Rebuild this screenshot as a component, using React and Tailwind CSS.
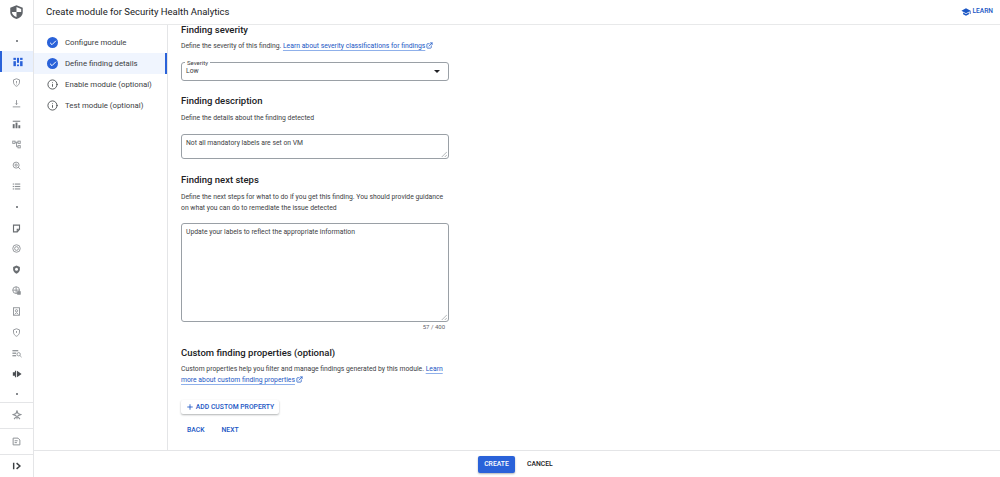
import { Plus, ExternalLink, Check, Info } from 'lucide-react';

const Glyph = ({ children }) => (
    <svg viewBox="0 0 24 24" className="w-[9px] h-[9px]" fill="none" stroke="#8d9195" strokeWidth="2.4">
        {children}
    </svg>
);

const Dot = () => <div className="w-[2px] h-[2px] rounded-full bg-[#5f6368]"></div>;

const railIcons = [
    <Dot />,
    <svg viewBox="0 0 24 24" className="w-[10px] h-[10px]" fill="#2a62d9">
        <rect x="1" y="2" width="6" height="5" /><rect x="1" y="10" width="6" height="12" /><rect x="9.500" y="2" width="5" height="12" /><rect x="9.500" y="18" width="5" height="4" /><rect x="17" y="2" width="6" height="5" /><rect x="17" y="10" width="6" height="12" />
    </svg>,
    <Glyph><path d="M12 2l8 3v6c0 5-3.500 9-8 11-4.500-2-8-6-8-11V5z" /><path d="M12 8v5M12 15v2" /></Glyph>,
    <Glyph><path d="M12 3v12M9 12l3 3 3-3M2 21h20" /></Glyph>,
    <svg viewBox="0 0 24 24" className="w-[9px] h-[9px]" fill="#6b6f73">
        <rect x="2" y="2" width="20" height="2.500" /><rect x="2" y="11" width="5" height="11" /><rect x="9.500" y="7" width="5" height="15" /><rect x="17" y="14" width="5" height="8" />
    </svg>,
    <Glyph><rect x="2" y="3" width="6" height="6" /><rect x="16" y="3" width="6" height="6" /><rect x="16" y="15" width="6" height="6" /><path d="M8 6h8M12 6v12h4" /></Glyph>,
    <Glyph><circle cx="11" cy="11" r="8" /><circle cx="11" cy="11" r="3" /><path d="M16 16l6 6" /></Glyph>,
    <svg viewBox="0 0 24 24" className="w-[9px] h-[9px]" fill="#8d9195">
        <rect x="2" y="4" width="4" height="3" /><rect x="8" y="4" width="14" height="3" /><rect x="2" y="10.500" width="4" height="3" /><rect x="8" y="10.500" width="14" height="3" /><rect x="2" y="17" width="4" height="3" /><rect x="8" y="17" width="14" height="3" />
    </svg>,
    <Dot />,
    <svg viewBox="0 0 24 24" className="w-[9px] h-[9px]" fill="none" stroke="#6b6f73" strokeWidth="3">
        <path d="M4 3h16v11l-6 7H4z" /><path d="M14 21v-7h6" />
    </svg>,
    <Glyph><circle cx="12" cy="12" r="10" /><circle cx="12" cy="12" r="5" /></Glyph>,
    <svg viewBox="0 0 24 24" className="w-[9px] h-[9px]" fill="#6b6f73">
        <path d="M12 1l9 4v6c0 6-4 10-9 12-5-2-9-6-9-12V5z" /><circle cx="12" cy="11" r="4" fill="#fff" />
    </svg>,
    <Glyph><circle cx="11" cy="11" r="9" /><path d="M2 11h18M11 2v18" /><rect x="15" y="15" width="7" height="7" fill="#8d9195" /></Glyph>,
    <Glyph><rect x="4" y="2" width="16" height="20" /><circle cx="12" cy="10" r="3" /><path d="M7 20l5-5 5 5" /></Glyph>,
    <Glyph><path d="M12 2l8 3v6c0 5-3.500 9-8 11-4.500-2-8-6-8-11V5z" /><path d="M12 8v5" /></Glyph>,
    <svg viewBox="0 0 24 24" className="w-[10px] h-[10px]" fill="#8d9195">
        <rect x="1" y="5" width="14" height="3" /><rect x="1" y="11" width="9" height="3" /><rect x="1" y="17" width="9" height="3" /><circle cx="16" cy="15" r="4" fill="none" stroke="#8d9195" strokeWidth="2" /><path d="M19 18l4 4" stroke="#8d9195" strokeWidth="2" />
    </svg>,
    <svg viewBox="0 0 24 24" className="w-[10px] h-[10px]" fill="#4a4e52">
        <path d="M2 8h5V4h3v16H7v-4H2zM12 4l11 8-11 8z" />
    </svg>,
    <Dot />,
];

const steps = [
    { label: 'Configure module', done: true },
    { label: 'Define finding details', done: true, active: true },
    { label: 'Enable module (optional)' },
    { label: 'Test module (optional)' },
];

const DocLink = ({ children }) => (
    <a className="text-[#1a56c4] underline decoration-[#8fb0ea] underline-offset-2">{children}</a>
);

const OpenIcon = () => <ExternalLink className="inline-block ml-[1px] align-[-1px] text-[#1a56c4]" size={7} strokeWidth={2.5} />;

const Grip = () => (
    <svg viewBox="0 0 8 8" className="absolute right-[1px] bottom-[1px] w-[6px] h-[6px]" stroke="#80868b" strokeWidth="0.8">
        <path d="M1 8l7-7M5 8l3-3" />
    </svg>
);

const App = () => {
    return (
        <div className="w-[1000px] h-[477px] flex overflow-hidden bg-white text-[#202124] font-['Roboto',sans-serif]">
            {/* Left rail */}
            <aside className="w-[34px] shrink-0 border-r border-[#e4e5e7] flex flex-col">
                <div className="h-[24px] shrink-0 flex items-center justify-center">
                    <svg viewBox="0 0 24 24" className="w-[15px] h-[16px]">
                        <path d="M12 1l10 4v7c0 5.500-4.300 9.500-10 11C6.300 21.500 2 17.500 2 12V5z" fill="#5f6368" />
                        <path d="M12 4l7.500 3v5H12zM12 12v8C8 18.500 5 16 4.600 12z" fill="#fff" />
                    </svg>
                </div>
                <div className="flex flex-col mt-[6.500px]">
                    {railIcons.map((icon, i) => (
                        <div
                            key={i}
                            className={i === 1
                                ? 'h-[20.800px] flex items-center justify-center bg-[#e8f0fe] border-l-2 border-[#2a62d9]'
                                : 'h-[20.800px] flex items-center justify-center'}
                        >
                            {icon}
                        </div>
                    ))}
                </div>
                <div className="mt-[-3px] h-[26px] border-t border-[#e4e5e7] flex items-center justify-center">
                    <svg viewBox="0 0 24 24" className="w-[10px] h-[10px]" fill="none" stroke="#8d9195" strokeWidth="2.600">
                        <path d="M12 2l2.500 6.500L21 11l-6.500 2.500L12 20l-2.500-6.500L3 11l6.500-2.500z" />
                        <path d="M5 22l4-5M19 22l-4-5" />
                    </svg>
                </div>
                <div className="h-[26px] border-t border-[#e4e5e7] flex items-center justify-center">
                    <svg viewBox="0 0 24 24" className="w-[9px] h-[9px]" fill="none" stroke="#8d9195" strokeWidth="2.600">
                        <path d="M3 3h13l5 5v13H3z" /><path d="M7 10h8M7 15h6" />
                    </svg>
                </div>
                <div className="flex-1 border-t border-[#e4e5e7] flex items-center justify-center">
                    <svg viewBox="0 0 24 24" className="w-[10px] h-[10px]" fill="none" stroke="#3c4043" strokeWidth="3.500">
                        <path d="M4 4v16M11 5l8 7-8 7" />
                    </svg>
                </div>
            </aside>

            <div className="flex-1 min-w-0 flex flex-col">
                {/* Header */}
                <header className="h-[25px] shrink-0 border-b border-[#e8e9ea] flex items-center justify-between pl-[12px] pr-[7px]">
                    <h1 className="text-[9.500px] font-normal">Create module for Security Health Analytics</h1>
                    <div className="flex items-center gap-[2px] text-[#1a56c4] text-[6.600px] font-medium">
                        <svg viewBox="0 0 24 24" className="w-[10px] h-[10px]" fill="#1a56c4">
                            <path d="M12 3L1 9l11 6 9-4.900V17h2V9zM5 13.200v4L12 21l7-3.800v-4L12 17z" />
                        </svg>
                        LEARN
                    </div>
                </header>

                <div className="flex flex-1 min-h-0">
                    {/* Steps */}
                    <nav className="w-[134px] shrink-0 border-r border-[#e4e5e7] pt-[7px]">
                        {steps.map((step) => (
                            <div
                                key={step.label}
                                className={step.active
                                    ? 'h-[21px] flex items-center pl-[13px] gap-[7px] bg-[#f0f5fe] border-r-2 border-[#2a62d9]'
                                    : 'h-[21px] flex items-center pl-[13px] gap-[7px]'}
                            >
                                {step.done ? (
                                    <span className="w-[11px] h-[11px] shrink-0 rounded-full bg-[#2a62d9] flex items-center justify-center">
                                        <Check size={8} strokeWidth={3} className="text-white" />
                                    </span>
                                ) : (
                                    <Info size={11} strokeWidth={1.8} className="shrink-0 text-[#3c4043]" />
                                )}
                                <span className="text-[7.800px] text-[#3c4043] whitespace-nowrap">{step.label}</span>
                            </div>
                        ))}
                    </nav>

                    {/* Form */}
                    <main className="flex-1 min-w-0 overflow-hidden pl-[13px]">
                        <div className="w-[268px]">
                            <h2 className="text-[9.500px] font-medium leading-[10px]">Finding severity</h2>
                            <p className="text-[6.800px] leading-[10px] mt-[6px] text-[#3c4043]">
                                Define the severity of this finding. <DocLink>Learn about severity classifications for findings</DocLink><OpenIcon />
                            </p>
                            <div className="relative h-[19px] mt-[11px] rounded-[3px] border border-[#9aa0a6] flex items-center justify-between pl-[4px] pr-[8px]">
                                <span className="absolute left-[3px] top-[-4px] bg-white px-[2px] text-[6px] leading-[7px] text-[#3c4043]">Severity</span>
                                <span className="text-[6.800px] text-[#3c4043]">Low</span>
                                <span className="w-0 h-0 border-x-[3px] border-x-transparent border-t-[3px] border-t-[#202124]"></span>
                            </div>

                            <h2 className="text-[9.500px] font-medium leading-[10px] mt-[15px]">Finding description</h2>
                            <p className="text-[6.800px] leading-[10px] mt-[7px] text-[#3c4043]">Define the details about the finding detected</p>
                            <div className="relative h-[25px] mt-[11px] rounded-[3px] border border-[#9aa0a6] px-[4px] pt-[3px] text-[6.800px] leading-[10px] text-[#3c4043]">
                                Not all mandatory labels are set on VM
                                <Grip />
                            </div>

                            <h2 className="text-[9.500px] font-medium leading-[10px] mt-[16px]">Finding next steps</h2>
                            <p className="text-[6.800px] leading-[10.500px] mt-[7px] text-[#3c4043]">
                                Define the next steps for what to do if you get this finding. You should provide guidance on what you can do to remediate the issue detected
                            </p>
                            <div className="relative h-[99px] mt-[10px] rounded-[3px] border border-[#9aa0a6] px-[4px] pt-[3px] text-[6.800px] leading-[10px] text-[#3c4043]">
                                Update your labels to reflect the appropriate information
                                <Grip />
                            </div>
                            <div className="text-right pr-[4px] text-[6px] leading-[8px] text-[#5f6368] mt-[1px]">57 / 400</div>

                            <h2 className="text-[9.500px] font-medium leading-[10px] mt-[17px]">Custom finding properties (optional)</h2>
                            <p className="text-[6.800px] leading-[10.500px] mt-[6px] text-[#3c4043]">
                                Custom properties help you filter and manage findings generated by this module. <DocLink>Learn more about custom finding properties</DocLink><OpenIcon />
                            </p>
                            <button className="mt-[15px] h-[14px] w-[98px] rounded-[2px] bg-white shadow-[0_1px_2px_rgba(60,64,67,0.4)] flex items-center justify-center gap-[2px] text-[6.800px] font-medium text-[#1a56c4]">
                                <Plus size={8} strokeWidth={2.5} />
                                ADD CUSTOM PROPERTY
                            </button>
                            <div className="flex gap-[17px] mt-[11px] pl-[6px] text-[6.800px] font-medium text-[#1a56c4] leading-[10px]">
                                <span>BACK</span>
                                <span>NEXT</span>
                            </div>
                        </div>
                    </main>
                </div>

                {/* Footer actions */}
                <footer className="h-[27px] shrink-0 border-t border-[#e4e5e7] flex items-center pl-[444px] gap-[12px] text-[6.800px] font-medium">
                    <button className="w-[37px] h-[17px] rounded-[2px] bg-[#2a62d9] text-white shadow-[0_1px_2px_rgba(60,64,67,0.4)]">CREATE</button>
                    <button className="text-[#202124]">CANCEL</button>
                </footer>
            </div>
        </div>
    );
};

export default App;
